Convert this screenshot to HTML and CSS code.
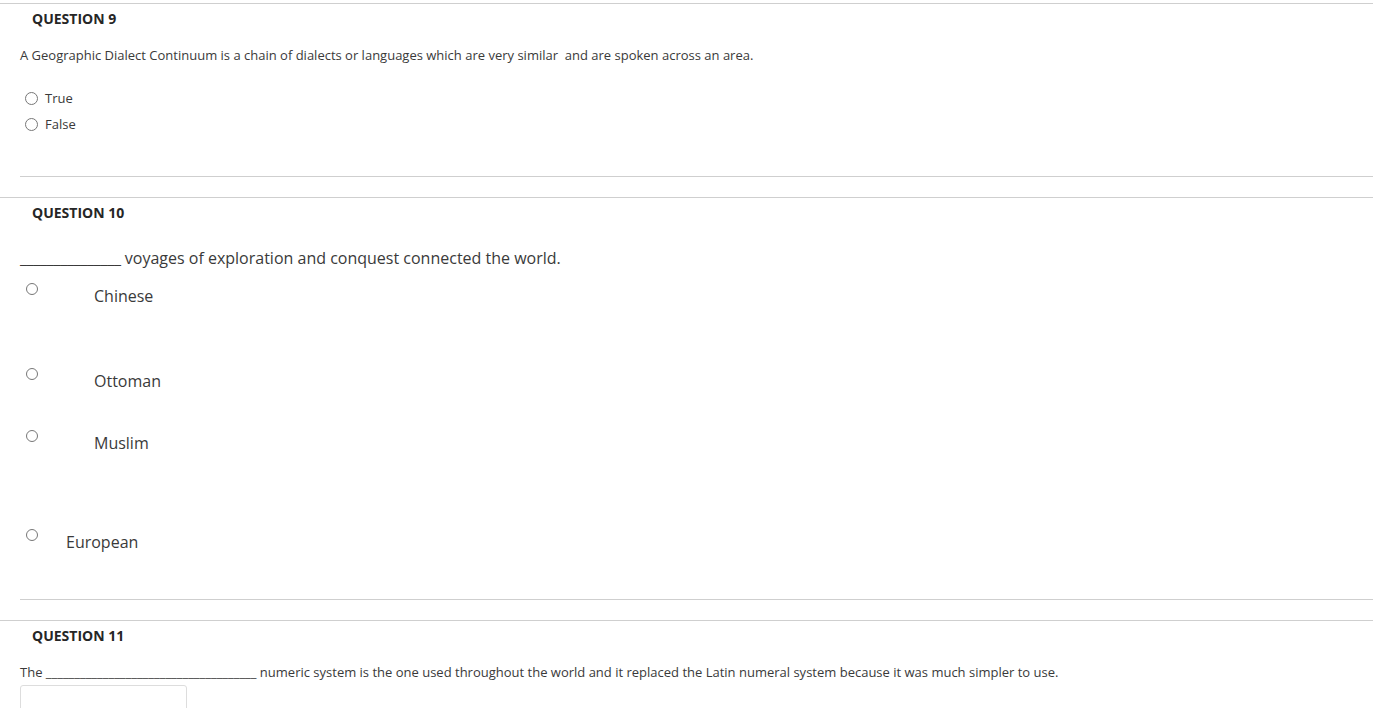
FILE: index.html
```html
<!DOCTYPE html>
<html lang="en">
<head>
<meta charset="utf-8">
<title>Quiz</title>
<link rel="stylesheet" href="styles.css">
</head>
<body>
<div class="page">
  <section class="question q9">
    <h3 class="q-title">QUESTION 9</h3>
    <p class="q-text">A Geographic Dialect Continuum is a chain of dialects or languages which are very similar&nbsp; and are spoken across an area.</p>
    <ul class="tf-options">
      <li class="tf-row"><span class="radio radio-lg"></span><span class="tf-label">True</span></li>
      <li class="tf-row"><span class="radio radio-lg"></span><span class="tf-label">False</span></li>
    </ul>
    <div class="separator"></div>
  </section>

  <section class="question q10">
    <h3 class="q-title">QUESTION 10</h3>
    <p class="q-text q-text-lg"><span class="blank-tight">_______________</span> voyages of exploration and conquest connected the world.</p>
    <ul class="mc-options">
      <li class="mc-row row-1"><span class="radio"></span><span class="mc-label">Chinese</span></li>
      <li class="mc-row row-2"><span class="radio"></span><span class="mc-label">Ottoman</span></li>
      <li class="mc-row row-3"><span class="radio"></span><span class="mc-label">Muslim</span></li>
      <li class="mc-row row-4"><span class="radio"></span><span class="mc-label mc-label-near">European</span></li>
    </ul>
    <div class="separator"></div>
  </section>

  <section class="question q11">
    <h3 class="q-title">QUESTION 11</h3>
    <p class="q-text">The _____________________________________ numeric system is the one used throughout the world and it replaced the Latin numeral system because it was much simpler to use.</p>
    <div class="answer-box"></div>
  </section>
</div>
</body>
</html>
```

FILE: styles.css
```css
* { box-sizing: border-box; }
html, body { margin: 0; padding: 0; background: #fff; }
body {
  font-family: "Open Sans", "Noto Sans", sans-serif;
  color: #333;
  overflow: hidden;
}
.page { padding-top: 3px; }

.question {
  border-top: 1px solid #cfcfcf;
}
.q10, .q11 { margin-top: 20px; }

.q-title {
  margin: 0;
  padding: 6px 0 0 32px;
  font-size: 14px;
  line-height: 18px;
  font-weight: 700;
  color: #262626;
}
.q-text {
  margin: 18px 0 0 20px;
  font-size: 13px;
  line-height: 18px;
  color: #3a3a3a;
}
.q-text-lg {
  margin-top: 25px;
  font-size: 16px;
  line-height: 22px;
}
.blank-tight { letter-spacing: -0.3px; }

ul { list-style: none; margin: 0; padding: 0; }

.tf-options { margin: 25px 0 0 25px; display: flex; flex-direction: column; gap: 8px; }
.tf-row { display: flex; align-items: center; height: 18px; gap: 7px; }
.tf-label { font-size: 13px; line-height: 18px; color: #3a3a3a; }

.radio {
  display: inline-block;
  flex: none;
  width: 12px;
  height: 12px;
  border: 1px solid #777;
  border-radius: 50%;
  background: #fff;
}
.radio-lg { width: 13px; height: 13px; }

.mc-options { margin: 14px 0 0 26px; }
.mc-row { display: flex; align-items: flex-start; }
.row-1 { height: 85px; }
.row-2 { height: 62px; }
.row-3 { height: 99px; }
.row-4 { height: 24px; }
.mc-label {
  margin: 2px 0 0 56px;
  font-size: 16px;
  line-height: 22px;
  color: #3a3a3a;
}
.mc-label-near { margin-left: 28px; }

.separator {
  margin-left: 20px;
  border-top: 1px solid #cfcfcf;
}
.q9 .separator { margin-top: 43px; }
.q10 .separator { margin-top: 46px; }

.answer-box {
  margin: 4px 0 0 20px;
  width: 167px;
  height: 34px;
  border: 1px solid #ddd;
  border-radius: 3px;
}
```
